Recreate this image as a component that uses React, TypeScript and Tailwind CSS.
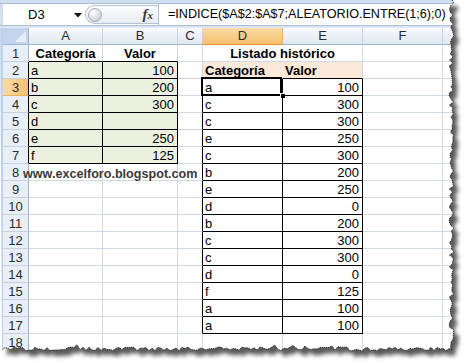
import clsx from 'clsx'

type Pair = [string, string]

const COLS = ['A', 'B', 'C', 'D', 'E', 'F', 'G']
const ROWS = Array.from({ length: 19 }, (_, i) => i + 1)

const LEFT: Record<number, Pair> = {
  2: ['a', '100'],
  3: ['b', '200'],
  4: ['c', '300'],
  5: ['d', ''],
  6: ['e', '250'],
  7: ['f', '125'],
}

// D3:E17
const HIST: Pair[] = [
  ['a', '100'],
  ['c', '300'],
  ['c', '300'],
  ['e', '250'],
  ['c', '300'],
  ['b', '200'],
  ['e', '250'],
  ['d', '0'],
  ['b', '200'],
  ['c', '300'],
  ['c', '300'],
  ['d', '0'],
  ['f', '125'],
  ['a', '100'],
  ['a', '100'],
]

const isGreen = (r: number, c: number) => r >= 2 && r <= 7 && c <= 1
const isHist = (r: number, c: number) => r >= 3 && r <= 17 && (c === 3 || c === 4)
const boxed = (r: number, c: number) => isGreen(r, c) || isHist(r, c)

function content(r: number, c: number): { text: string; right?: boolean; bold?: boolean } {
  if (r === 1 && c === 0) return { text: 'Categoría', bold: true }
  if (r === 1 && c === 1) return { text: 'Valor', bold: true }
  if (r === 2 && c === 3) return { text: 'Categoría', bold: true }
  if (r === 2 && c === 4) return { text: 'Valor', bold: true }
  if (LEFT[r] && c === 0) return { text: LEFT[r][0] }
  if (LEFT[r] && c === 1) return { text: LEFT[r][1], right: true }
  if (isHist(r, c)) return { text: HIST[r - 3][c === 3 ? 0 : 1], right: c === 4 }
  return { text: '' }
}

function Cell({ r, c }: { r: number; c: number }) {
  const { text, right, bold } = content(r, c)
  const rb = boxed(r, c) || boxed(r, c + 1)
  const bb = boxed(r, c) || boxed(r + 1, c)
  const peach = r === 2 && (c === 3 || c === 4)
  const selected = r === 3 && c === 3
  return (
    <div
      className={clsx(
        'relative flex h-[17px] items-center whitespace-nowrap border-r border-b pt-[1px] text-[13px] text-black',
        rb ? 'border-r-black' : peach && c === 3 ? 'border-r-[#fde9d9]' : 'border-r-[#d0d7e5]',
        bb ? 'border-b-black' : 'border-b-[#d0d7e5]',
        isGreen(r, c) && 'bg-[#ebf1de]',
        peach && 'bg-[#fde9d9]',
        right ? 'justify-end pr-[3px]' : bold && r === 1 ? 'justify-center' : 'pl-[2px]',
        bold && 'font-bold',
      )}
    >
      {text}
      {selected && (
        <>
          <div className="absolute -top-[2px] -left-[2px] h-[19px] w-[81px] border-2 border-black" />
          <div className="absolute -right-[4px] -bottom-[4px] h-[6px] w-[6px] border border-white bg-black" />
        </>
      )}
    </div>
  )
}

function FormulaBar() {
  return (
    <div className="flex flex-col">
      <div className="h-[3px] bg-[#cfdff2]" />
      <div className="flex h-[23px] items-stretch border-y border-[#a9bdd6] bg-white">
        <div className="w-[3px] bg-[#cfdff2]" />
        <div className="relative flex w-[82px] items-center pl-[25px] text-[13px] text-black">
          D3
          <svg className="absolute top-[9px] left-[71px]" width="8" height="5" viewBox="0 0 8 5">
            <path d="M0 0h8L4 4.5z" fill="#111" />
          </svg>
        </div>
        <div className="relative my-[1px] flex w-[73px] items-center justify-end rounded-l-full border border-r-0 border-[#b5c3d6] bg-linear-to-b from-[#fdfdfe] to-[#e7ecf3] pr-[5px]">
          <div className="absolute top-[2px] left-[2px] h-[14px] w-[14px] rounded-full border border-[#a7afba] bg-radial-[at_35%_30%] from-white to-[#b9c0c9]" />
          <span className="font-['Liberation_Serif',serif] text-[15px] font-bold text-[#3a3a3a] italic">
            f<span className="text-[11px]">x</span>
          </span>
        </div>
        <div className="w-[1px] bg-[#b5c3d6]" />
        <div className="flex flex-1 items-center pl-[9px] text-[12.6px] whitespace-nowrap text-black">
          =INDICE($A$2:$A$7;ALEATORIO.ENTRE(1;6);0)
        </div>
      </div>
      <div className="h-[2px] bg-[#dde7f3]" />
    </div>
  )
}

function Sheet() {
  return (
    <div className="relative grid grid-cols-[3px_26px_74px_75px_25px_80px_80px_80px_80px]">
      {/* header row */}
      <div className="h-[17px] bg-[#bcd1ec]" />
      <div className="relative h-[17px] border-r border-b border-[#9eb6ce] bg-[#c3d5ec]">
        <svg className="absolute right-[2px] bottom-[2px]" width="11" height="11" viewBox="0 0 11 11">
          <path d="M11 0v11H0z" fill="#e6edf7" />
        </svg>
      </div>
      {COLS.map((col) => (
        <div
          key={col}
          className={clsx(
            'flex h-[17px] items-center justify-center border-r border-b text-[13px] text-[#2b2b2b]',
            col === 'D'
              ? 'border-r-[#f0b35a] border-b-[#f29436] bg-linear-to-b from-[#fadba5] to-[#f4c06a]'
              : 'border-r-[#c5d2e3] border-b-[#9eb6ce] bg-linear-to-b from-[#f8fafd] to-[#dfe7f1]',
          )}
        >
          {col === 'G' ? '' : col}
        </div>
      ))}

      {ROWS.map((r) => (
        <div key={r} className="contents">
          <div className="h-[17px] bg-[#bcd1ec]" />
          <div
            className={clsx(
              'flex h-[17px] items-center justify-center border-r border-b pt-[1px] text-[13px] text-[#2b2b2b]',
              r >= 2 && r <= 7 ? 'border-r-black' : r === 3 ? 'border-r-[#f29436]' : 'border-r-[#9eb6ce]',
              r === 3
                ? 'border-b-[#f0b35a] bg-linear-to-r from-[#fadba5] to-[#f4c06a]'
                : 'border-b-[#c5d2e3] bg-[#e9eff8]',
            )}
          >
            {r < 19 ? r : ''}
          </div>
          {COLS.map((_, c) => {
            if (r === 1 && c === 4) return null
            if (r === 1 && c === 3)
              return (
                <div
                  key={c}
                  className="col-span-2 flex h-[17px] items-center justify-center border-r border-b border-[#d0d7e5] pt-[1px] text-[13px] font-bold text-black"
                >
                  Listado histórico
                </div>
              )
            return <Cell key={c} r={r} c={c} />
          })}
        </div>
      ))}

      <div className="absolute top-[137px] left-[23px] text-[12.6px] font-bold whitespace-nowrap text-[#3a3a3a]">
        www.excelforo.blogspot.com
      </div>
    </div>
  )
}

function seeded(seed: number) {
  let s = seed
  return () => {
    s = (s * 9301 + 49297) % 233280
    return s / 233280
  }
}

const rand = seeded(11)
const edge: string[] = []
for (let y = 0; y <= 348; y += 3) edge.push(`${(449 + rand() * 5).toFixed(1)},${y}`)
for (let x = 452; x >= 0; x -= 3) {
  const bump = rand() > 0.88 ? 4 * rand() : 0
  edge.push(`${x},${(347 + rand() * 4 - bump).toFixed(1)}`)
}
const torn = ['0,0', ...edge].join(' ')
const tornLine = edge.join(' ')

function TornEdge() {
  return (
    <svg className="pointer-events-none absolute inset-0" width="468" height="363" viewBox="0 0 468 363">
      <defs>
        <mask id="outside">
          <rect width="468" height="363" fill="white" />
          <polygon points={torn} fill="black" />
        </mask>
        <filter id="blur" x="-5%" y="-5%" width="110%" height="110%">
          <feGaussianBlur stdDeviation="2.2" />
        </filter>
      </defs>
      <g mask="url(#outside)">
        <rect width="468" height="363" fill="white" />
        <polygon points={torn} transform="translate(5 6)" fill="#5a5a5a" filter="url(#blur)" />
      </g>
      <polyline points={tornLine} fill="none" stroke="#1a1a1a" strokeWidth="0.9" strokeDasharray="1.2 0.8" />
    </svg>
  )
}

export default function App() {
  return (
    <div className="relative h-[363px] w-[468px] overflow-hidden bg-white font-['Liberation_Sans',Arial,sans-serif]">
      <FormulaBar />
      <Sheet />
      <TornEdge />
    </div>
  )
}
